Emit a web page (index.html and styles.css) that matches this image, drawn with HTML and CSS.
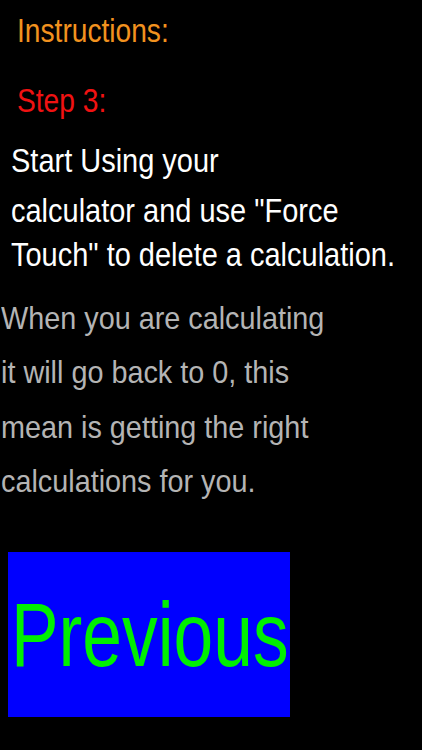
FILE: index.html
```html
<!DOCTYPE html>
<html lang="en">
<head>
<meta charset="utf-8">
<title>Instructions - Step 3</title>
<link rel="stylesheet" href="styles.css">
</head>
<body>
<main class="screen">
  <h1 class="title"><span class="sq sq-title">Instructions:</span></h1>
  <h2 class="step"><span class="sq sq-title">Step 3:</span></h2>
  <p class="lead lead-first"><span class="sq sq-lead">Start Using your</span></p>
  <p class="lead"><span class="sq sq-lead">calculator and use "Force</span><br><span class="sq sq-lead">Touch" to delete a calculation.</span></p>
  <p class="note"><span class="sq sq-note">When you are calculating</span><br><span class="sq sq-note">it will go back to 0, this</span><br><span class="sq sq-note">mean is getting the right</span><br><span class="sq sq-note">calculations for you.</span></p>
  <button class="prev" type="button"><span class="sq sq-prev">Previous</span></button>
</main>
</body>
</html>
```

FILE: styles.css
```css
html, body {
  margin: 0;
  padding: 0;
  background: #000;
}

body {
  width: 422px;
  height: 750px;
  overflow: hidden;
  font-family: "Liberation Sans", Arial, Helvetica, sans-serif;
}

.screen {
  width: 422px;
  display: flex;
  flex-direction: column;
  align-items: flex-start;
  overflow: hidden;
}

.sq {
  display: inline-block;
  white-space: nowrap;
  transform-origin: left center;
}

.sq-title { transform: scaleX(0.828); }
.sq-lead { transform: scaleX(0.878); }
.sq-note { transform: scaleX(0.90); }
.sq-prev { transform: scaleX(0.784); }

.title,
.step {
  margin: 0;
  padding-left: 17px;
  font-size: 34px;
  line-height: 40px;
  font-weight: normal;
}

.title {
  margin-top: 10px;
  color: #f2921f;
}

.step {
  margin-top: 30px;
  color: #f01212;
}

.lead {
  margin: 0;
  padding-left: 11px;
  width: 411px;
  overflow: hidden;
  font-size: 33px;
  line-height: 44px;
  color: #ffffff;
}

.lead-first {
  margin-top: 19px;
  margin-bottom: 6px;
}

.note {
  margin: 14px 0 0;
  padding-left: 1px;
  font-size: 32px;
  line-height: 54.3px;
  color: #b4b4b4;
}

.prev {
  margin: 44px 0 0 8px;
  width: 282px;
  height: 165px;
  padding: 0 0 0 3px;
  border: 0;
  background: #0000ff;
  color: #00f000;
  font-family: "Liberation Sans", Arial, Helvetica, sans-serif;
  font-size: 91px;
  line-height: 91px;
  display: flex;
  align-items: center;
  justify-content: flex-start;
  overflow: hidden;
  text-align: left;
}
```
